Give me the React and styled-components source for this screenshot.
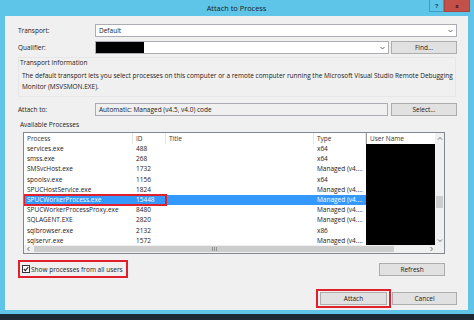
import React from 'react';
import styled, { createGlobalStyle } from 'styled-components';

const Global = createGlobalStyle`
  html, body { margin: 0; padding: 0; background: #1d2a36; }
  body { font-family: "Open Sans", "Noto Sans", sans-serif; }
  * { box-sizing: border-box; }
`;

const Screen = styled.div`
  width: 474px;
  height: 320px;
  overflow: hidden;
  background: #1d2a36;
  display: flex;
  flex-direction: column;
`;

const Window = styled.div`
  height: 314px;
  flex: none;
  background: #5ec5e9;
  padding: 0 6px 4px 5px;
  display: flex;
  flex-direction: column;
`;

const TitleBar = styled.div`
  height: 16px;
  flex: none;
  display: grid;
  grid-template-columns: 1fr auto 1fr;
`;

const Title = styled.div`
  grid-column: 2;
  font-size: 7.4px;
  line-height: 17px;
  color: #1a1a1a;
  white-space: nowrap;
`;

const Captions = styled.div`
  grid-column: 3;
  justify-self: end;
  display: flex;
  height: 12px;
  margin-right: -2px;
`;

const CaptionButton = styled.div`
  width: ${p => p.$w}px;
  height: 12px;
  display: flex;
  align-items: center;
  justify-content: center;
  background: ${p => (p.$close ? '#c4504a' : '#5ec5e9')};
  border: 1px solid ${p => (p.$close ? '#b0443f' : '#3d9cc0')};
  border-top: none;
  font: bold 6px "Liberation Sans", sans-serif;
  color: ${p => (p.$close ? '#2a0f0f' : '#143f57')};
`;

const Body = styled.div`
  flex: 1;
  background: #f0f0f0;
  padding: 8px 11px 0 13px;
  display: flex;
  flex-direction: column;
  font-size: 6.5px;
  color: #1a1a1a;
  white-space: nowrap;
`;

const FieldRow = styled.div`
  display: flex;
  align-items: center;
  height: 13px;
  margin-top: ${p => p.$mt || 0}px;
`;

const Label = styled.div`
  width: 77px;
  flex: none;
`;

const Combo = styled.div`
  flex: 1;
  height: 13px;
  background: ${p => (p.$readonly ? '#f0f0f0' : '#fff')};
  border: 1px solid #abadb3;
  display: flex;
  align-items: center;
`;

const ComboText = styled.div`
  flex: 1;
  padding-left: 3px;
`;

const Redact = styled.div`
  width: ${p => p.$w}px;
  align-self: stretch;
  background: #000;
`;

const Chevron = styled.svg`
  width: 5px;
  height: 4px;
  margin-right: 3px;
  flex: none;
`;

const Button = styled.div`
  width: ${p => p.$w || 66}px;
  height: 13px;
  flex: none;
  background: #e1e1e1;
  border: 1px solid #adadad;
  display: flex;
  align-items: center;
  justify-content: center;
  margin-left: ${p => p.$ml || 0}px;
`;

const InfoPanel = styled.div`
  margin-top: 3px;
  height: 40px;
  width: 438px;
  border: 1px solid #e6e6e6;
`;

const InfoTitle = styled.div`
  line-height: 10px;
  padding-left: 1px;
`;

const InfoText = styled.div`
  line-height: 11px;
  padding-left: 3px;
  margin-top: 2px;
`;

const Group = styled.div`
  margin-top: 4px;
  width: 427px;
  display: flex;
  flex-direction: column;
`;

const GroupLabel = styled.div`
  line-height: 10px;
  padding-left: 2px;
`;

const List = styled.div`
  margin: 2px 0 0 5px;
  height: 122px;
  border: 1px solid #828790;
  background: #fff;
  display: grid;
  grid-template-columns: 1fr 9px;
  grid-template-rows: 1fr 8px;
  overflow: hidden;
`;

const ListView = styled.div`
  overflow: hidden;
`;

const HeaderRow = styled.div`
  display: flex;
  height: 11px;
`;

const HeaderCell = styled.div`
  width: ${p => p.$w}px;
  flex: none;
  padding-left: 3px;
  line-height: 11px;
  color: #333;
  border-right: 1px solid ${p => (p.$last ? '#828790' : '#e5e5e5')};
  border-left: ${p => (p.$last ? '1px solid #9a9a9a' : 'none')};
`;

const Row = styled.div`
  display: flex;
  height: 10.2px;
  background: ${p => (p.$sel ? '#3399ff' : 'transparent')};
  color: ${p => (p.$sel ? '#fff' : '#1a1a1a')};
`;

const Mark = styled.div`
  display: flex;
  outline: ${p => (p.$on ? '2px solid #e0202a' : 'none')};
  outline-offset: -1px;
`;

const Cell = styled.div`
  width: ${p => p.$w}px;
  flex: none;
  padding-left: 3px;
  line-height: 10.2px;
  overflow: hidden;
`;

const UserCell = styled(Cell)`
  background: #000;
`;

const VScroll = styled.div`
  background: #f0f0f0;
  display: flex;
  flex-direction: column;
  align-items: stretch;
`;

const ArrowBox = styled.div`
  width: ${p => p.$w || 9}px;
  height: ${p => p.$h || 10}px;
  flex: none;
  display: flex;
  align-items: center;
  justify-content: center;
`;

const VTrack = styled.div`
  flex: 1;
  display: flex;
  flex-direction: column;
  padding: 0 1px;
`;

const VThumb = styled.div`
  margin-top: 53px;
  height: 12px;
  background: #cdcdcd;
`;

const HScroll = styled.div`
  background: #f0f0f0;
  display: flex;
  align-items: stretch;
`;

const HTrack = styled.div`
  flex: 1;
  display: flex;
  padding: 1px 0;
`;

const HThumb = styled.div`
  width: 360px;
  margin-left: 2px;
  background: #cdcdcd;
  display: flex;
  align-items: center;
  justify-content: center;
`;

const Corner = styled.div`
  background: #f0f0f0;
`;

const CheckRow = styled.div`
  display: flex;
  align-items: center;
  justify-content: space-between;
  margin-top: 6px;
  height: 18px;
`;

const Annot = styled.div`
  border: 2px solid #e0202a;
  display: flex;
  align-items: center;
  padding: ${p => p.$pad};
  height: ${p => p.$h}px;
`;

const CheckBox = styled.div`
  width: 8px;
  height: 8px;
  border: 1px solid #333;
  background: #fff;
  margin-right: 1px;
  display: flex;
  align-items: center;
  justify-content: center;
`;

const Footer = styled.div`
  display: flex;
  justify-content: flex-end;
  align-items: center;
  margin-top: 11px;
`;

const ChevronDown = () => (
  <Chevron viewBox="0 0 5 4">
    <path d="M0.5 1 L2.5 3 L4.5 1" fill="none" stroke="#444" strokeWidth="0.8" />
  </Chevron>
);

const Arrow = ({ dir }) => {
  const d = {
    up: 'M1 3.5 L3 1.5 L5 3.5',
    down: 'M1 1.5 L3 3.5 L5 1.5',
    left: 'M3.5 1 L1.5 3 L3.5 5',
    right: 'M1.5 1 L3.5 3 L1.5 5',
  }[dir];
  const vertical = dir === 'up' || dir === 'down';
  return (
    <svg width={vertical ? 6 : 5} height={vertical ? 5 : 6} viewBox={vertical ? '0 0 6 5' : '0 0 5 6'}>
      <path d={d} fill="none" stroke="#606060" strokeWidth="0.9" />
    </svg>
  );
};

const cols = { p: 109, id: 33, t: 148, ty: 52, u: 70 };

const rows = [
  ['services.exe', '488', 'x64'],
  ['smss.exe', '268', 'x64'],
  ['SMSvcHost.exe', '1732', 'Managed (v4....'],
  ['spoolsv.exe', '1156', 'x64'],
  ['SPUCHostService.exe', '1824', 'Managed (v4....'],
  ['SPUCWorkerProcess.exe', '15448', 'Managed (v4....', true],
  ['SPUCWorkerProcessProxy.exe', '8480', 'Managed (v4....'],
  ['SQLAGENT.EXE', '2820', 'Managed (v4....'],
  ['sqlbrowser.exe', '2132', 'x86'],
  ['sqlservr.exe', '1572', 'Managed (v4....'],
];

export default function App() {
  return (
    <>
      <Global />
      <Screen>
        <Window>
          <TitleBar>
            <Title>Attach to Process</Title>
            <Captions>
              <CaptionButton $w={15}>?</CaptionButton>
              <CaptionButton $w={26} $close>x</CaptionButton>
            </Captions>
          </TitleBar>
          <Body>
            <FieldRow>
              <Label>Transport:</Label>
              <Combo>
                <ComboText>Default</ComboText>
                <ChevronDown />
              </Combo>
            </FieldRow>
            <FieldRow $mt={4}>
              <Label>Qualifier:</Label>
              <Combo>
                <Redact $w={48} />
                <ComboText />
                <ChevronDown />
              </Combo>
              <Button $w={66} $ml={2}>Find...</Button>
            </FieldRow>
            <InfoPanel>
              <InfoTitle>Transport Information</InfoTitle>
              <InfoText>
                The default transport lets you select processes on this computer or a remote computer running the Microsoft Visual Studio Remote Debugging
                <br />
                Monitor (MSVSMON.EXE).
              </InfoText>
            </InfoPanel>
            <FieldRow $mt={6}>
              <Label>Attach to:</Label>
              <Combo $readonly>
                <ComboText>Automatic: Managed (v4.5, v4.0) code</ComboText>
              </Combo>
              <Button $w={66} $ml={3}>Select...</Button>
            </FieldRow>
            <Group>
              <GroupLabel>Available Processes</GroupLabel>
              <List>
                <ListView>
                  <HeaderRow>
                    <HeaderCell $w={cols.p}>Process</HeaderCell>
                    <HeaderCell $w={cols.id}>ID</HeaderCell>
                    <HeaderCell $w={cols.t}>Title</HeaderCell>
                    <HeaderCell $w={cols.ty}>Type</HeaderCell>
                    <HeaderCell $w={cols.u} $last>User Name</HeaderCell>
                  </HeaderRow>
                  {rows.map(([name, id, type, sel]) => (
                    <Row key={name} $sel={sel}>
                      <Mark $on={sel}>
                        <Cell $w={cols.p}>{name}</Cell>
                        <Cell $w={cols.id}>{id}</Cell>
                      </Mark>
                      <Cell $w={cols.t} />
                      <Cell $w={cols.ty}>{type}</Cell>
                      <UserCell $w={cols.u} />
                    </Row>
                  ))}
                </ListView>
                <VScroll>
                  <ArrowBox $h={10}><Arrow dir="up" /></ArrowBox>
                  <VTrack><VThumb /></VTrack>
                  <ArrowBox $h={10}><Arrow dir="down" /></ArrowBox>
                </VScroll>
                <HScroll>
                  <ArrowBox $w={8} $h={8}><Arrow dir="left" /></ArrowBox>
                  <HTrack>
                    <HThumb>
                      <svg width="5" height="4" viewBox="0 0 5 4">
                        <path d="M0.5 0 V4 M2.5 0 V4 M4.5 0 V4" stroke="#777" strokeWidth="0.7" />
                      </svg>
                    </HThumb>
                  </HTrack>
                  <ArrowBox $w={8} $h={8}><Arrow dir="right" /></ArrowBox>
                </HScroll>
                <Corner />
              </List>
              <CheckRow>
                <Annot $pad="0 3px 0 2px" $h={18}>
                  <CheckBox>
                    <svg width="6" height="6" viewBox="0 0 6 6">
                      <path d="M0.8 3 L2.4 4.6 L5.3 1" fill="none" stroke="#222" strokeWidth="1.1" />
                    </svg>
                  </CheckBox>
                  Show processes from all users
                </Annot>
                <Button $w={66}>Refresh</Button>
              </CheckRow>
            </Group>
            <Footer>
              <Annot $pad="1px 2px" $h={19}>
                <Button $w={67}>Attach</Button>
              </Annot>
              <Button $w={65} $ml={1}>Cancel</Button>
            </Footer>
          </Body>
        </Window>
      </Screen>
    </>
  );
}
